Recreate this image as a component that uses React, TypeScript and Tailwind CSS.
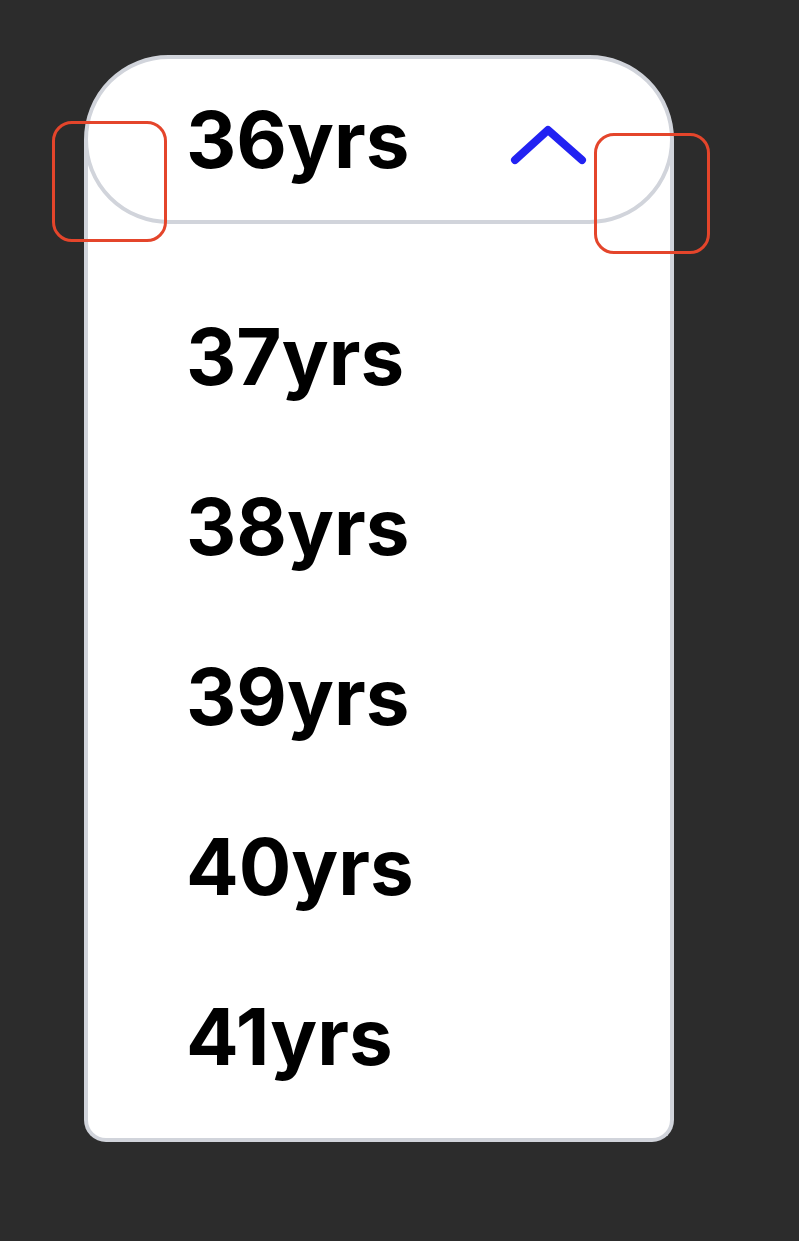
import React from "react";

const items = ["37yrs", "38yrs", "39yrs", "40yrs", "41yrs"];

export default function App() {
  return (
    <div
      className="relative min-h-[1241px] w-full bg-[#2c2c2c] pl-[84px] pt-[55px]"
      style={{ fontFamily: 'Inter, "Liberation Sans", Arial, sans-serif' }}
    >
      <div className="w-[590px]">
        <div className="relative z-10 flex h-[169px] items-center justify-between rounded-full border-4 border-[#d1d4db] bg-white pl-[98px] pr-[82px]">
          <span className="text-[78px] font-bold leading-none text-black">36yrs</span>
          <svg width="80" height="50" viewBox="0 0 80 50" fill="none">
            <path
              d="M7 45 L40 15 L74 45"
              stroke="#2222f2"
              strokeWidth="8"
              strokeLinecap="round"
              strokeLinejoin="round"
            />
          </svg>
        </div>
        <div className="-mt-[84px] rounded-b-[22px] border-4 border-t-0 border-[#d1d4db] bg-white pb-[16px] pl-[98px] pt-[132px]">
          {items.map((t) => (
            <div key={t} className="flex h-[170px] items-center">
              <span className="text-[78px] font-bold leading-none text-black">{t}</span>
            </div>
          ))}
        </div>
      </div>
      <div className="pointer-events-none absolute left-[52px] top-[121px] z-20 h-[121px] w-[115px] rounded-[20px] border-[3px] border-[#e4452b]" />
      <div className="pointer-events-none absolute left-[594px] top-[133px] z-20 h-[121px] w-[116px] rounded-[20px] border-[3px] border-[#e4452b]" />
    </div>
  );
}
